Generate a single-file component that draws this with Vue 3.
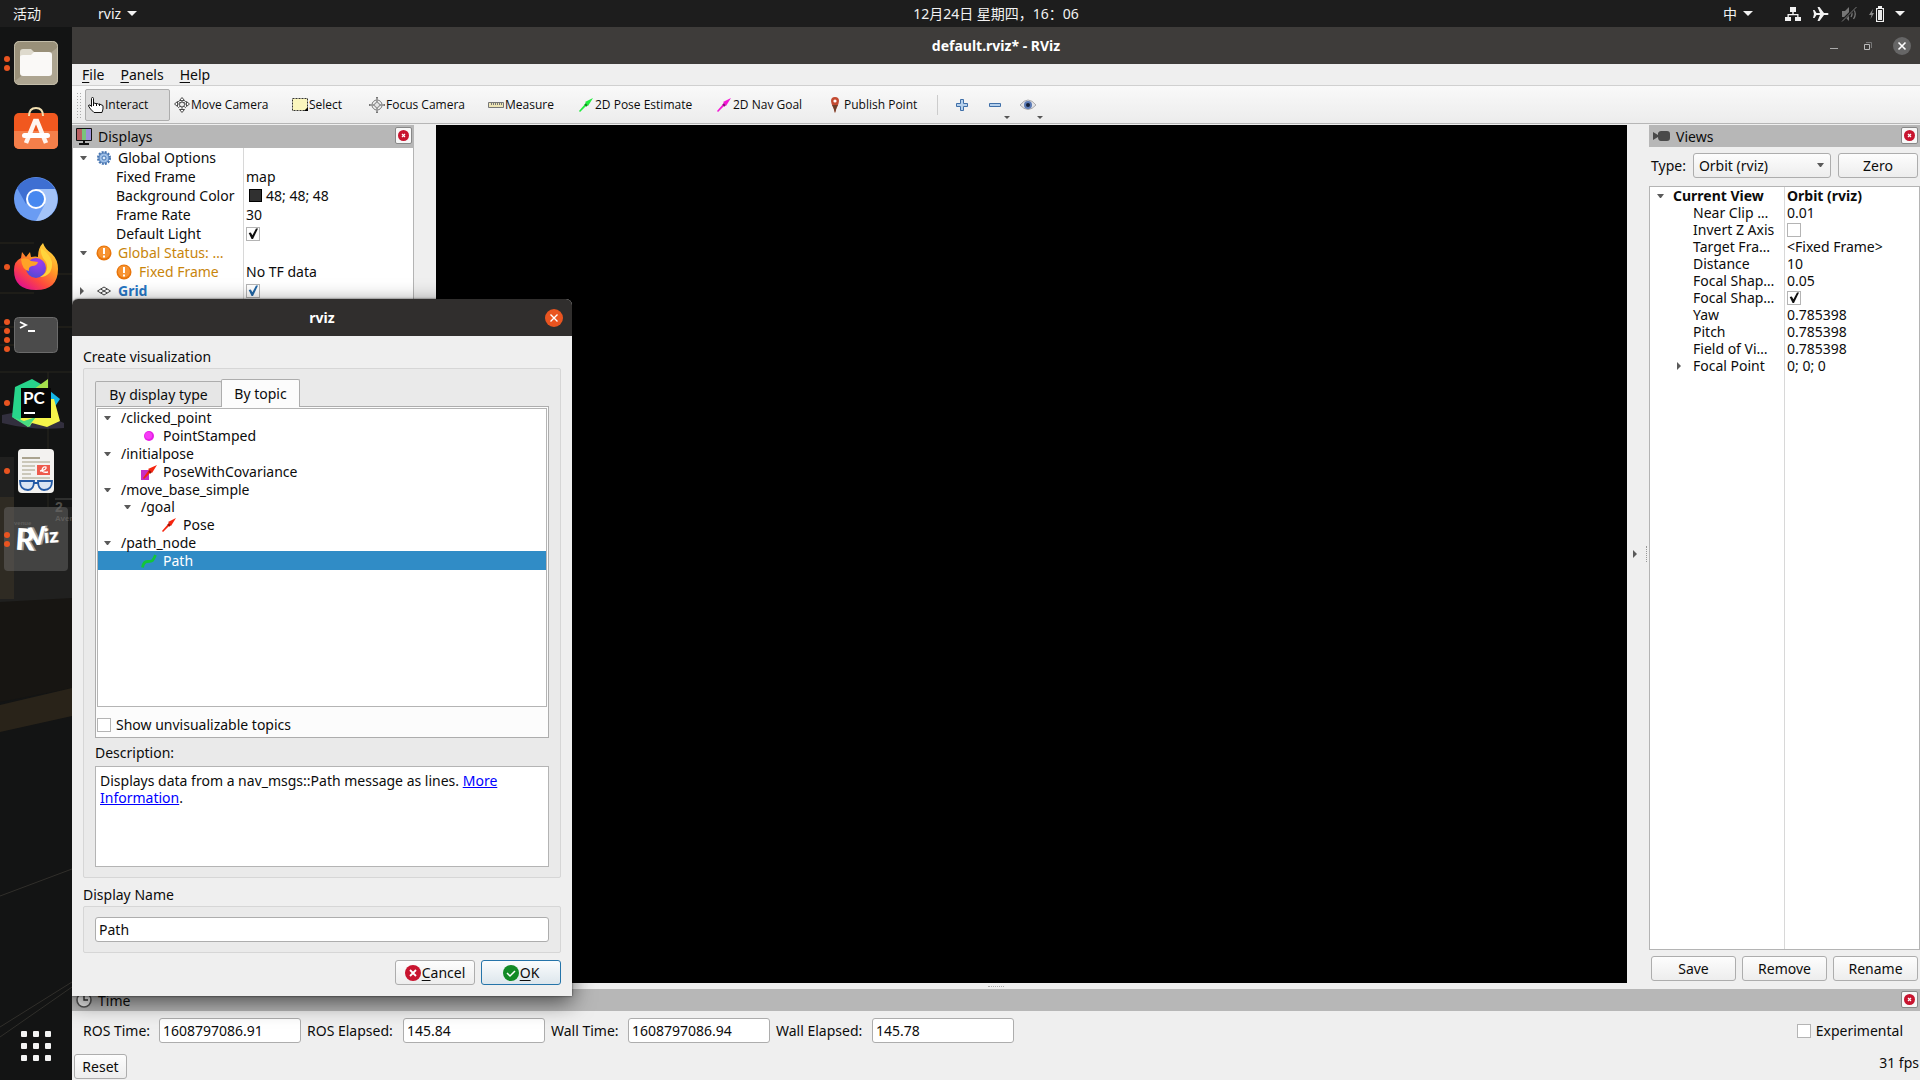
<template>
  <div class="desktop">
    <header class="topbar">
      <button class="top-btn activities">活动</button>
      <button class="top-btn app-menu">rviz <i class="caret"></i></button>
      <button class="top-btn clock">12月24日 星期四，16：06</button>
      <div class="tray">
        <button class="top-btn lang">中 <i class="caret"></i></button>
        <svg width="16" height="16" viewBox="0 0 16 16" fill="#f2f2f2">
          <path d="M5 1h6v5H8.700v2H13.500v3H16v4h-6v-4h2.200V9.300H3.800V11H6v4H0v-4h2.500V8h4.800V6H5z" />
        </svg>
        <svg width="16" height="16" viewBox="0 0 16 16" fill="#f2f2f2">
          <path d="M0 4h1.500L3.500 7H7L4.500 1H6.500L11 7h3.500a1 1 0 0 1 0 2H11l-4.500 6H4.500L7 9H3.500l-2 3H0l1-4z" />
        </svg>
        <svg width="16" height="16" viewBox="0 0 16 16" fill="#777">
          <path d="M1 5h3l4-4v14l-4-4H1z" />
          <path d="M10 5q2 3 0 6M12.500 3q3.500 5 0 10" fill="none" stroke="#777" stroke-width="1.300" />
          <path d="M1 15L15 1" stroke="#1d1d1d" stroke-width="2.500" />
          <path d="M1 15.500L15.500 1" stroke="#777" />
        </svg>
        <svg width="16" height="16" viewBox="0 0 16 16">
          <path d="M4 3L0 9h2.500L1.500 13 5 7H3z" fill="#8b8b8b" />
          <path d="M9 0h4v2h2v14H7V2h2z" fill="#f2f2f2" />
          <path d="M8.500 3.500h5v11h-5z" fill="#e8e8e8" stroke="#1d1d1d" />
        </svg>
        <i class="caret"></i>
      </div>
    </header>

    <div class="workspace">
      <nav class="dock">
        <svg class="wallpaper" viewBox="0 0 72 1053" preserveAspectRatio="none">
          <path d="M0 216h34M0 266h34M30 247h42M0 300h72M0 318h30" stroke="#3b3524" opacity=".6" />
          <path d="M0 345h72M48 345v190" stroke="#332e25" opacity=".7" />
          <path d="M2 388q30-8 62 8v5q-30 3-62-5z" fill="#4d4560" opacity=".55" />
          <path d="M0 430h14v50h58v110H0z" fill="#20201f" />
          <path d="M0 470h14v102H0z" fill="#3a3426" opacity=".6" />
          <path d="M55 472h17" stroke="#4a4a48" />
          <text x="55" y="485" class="sign" font-size="14">2</text>
          <text x="55" y="494" class="sign" font-size="8">Aven</text>
          <text x="14" y="498" class="sign" font-size="6">venue</text>
          <path d="M0 575l72-4v90L0 675z" fill="#171512" />
          <path d="M0 678l72-17v28L0 705z" fill="#292319" />
          <path d="M0 869l72-27M0 1000l72-45M0 1010l72-50" stroke="#302f2b" fill="none" />
        </svg>
        <button v-for="a in apps" :key="a.name" class="dock-item" :class="{ current: a.name === 'rviz' }" :aria-label="a.name">
          <span class="dots"><i v-for="n in a.windows" :key="n"></i></span>

          <svg v-if="a.name === 'files'" width="48" height="48" viewBox="0 0 48 48">
            <rect x="2" y="2" width="44" height="44" rx="5" fill="#999079" />
            <path d="M3 42L46 8v33a5 5 0 0 1-5 5H7z" fill="#ada591" />
            <rect x="2.500" y="2.500" width="43" height="43" rx="5" fill="none" stroke="#c3bda9" />
            <path d="M8 13q0-3 3-3h8l4 4h8v9H8z" fill="#dedacd" />
            <path d="M8 18q0-2 3-2h8l3-3h15q3 0 3 3v18q0 3-3 3H11q-3 0-3-3z" fill="#faf9f7" />
          </svg>
          <svg v-else-if="a.name === 'software'" width="48" height="48" viewBox="0 0 48 48">
            <rect x="2" y="6" width="44" height="36" rx="5" fill="#f1581f" />
            <path d="M2 24h44v13a5 5 0 0 1-5 5H7a5 5 0 0 1-5-5z" fill="#f47f4a" />
            <path d="M17 9q0-8 7-8t7 8" fill="none" stroke="#f2dfb0" stroke-width="2" />
            <path d="M14 36l9-22h2l9 22" fill="none" stroke="#fff5ef" stroke-width="4.500" />
            <rect x="10" y="26" width="28" height="5" rx="2.500" fill="#fff" />
          </svg>
          <svg v-else-if="a.name === 'chromium'" width="48" height="48" viewBox="0 0 48 48">
            <circle cx="24" cy="24" r="22" fill="#6a9cf3" />
            <path d="M5 13A22 22 0 0 1 43 14H24L14 29z" fill="#3e6fd2" />
            <path d="M43 14A22 22 0 0 1 24 46l9-17-9-15z" fill="#a3c3f8" />
            <circle cx="24" cy="24" r="10" fill="#fff" />
            <circle cx="24" cy="24" r="8" fill="#4788f0" />
          </svg>
          <svg v-else-if="a.name === 'firefox'" width="48" height="48" viewBox="0 0 48 48">
            <defs>
              <linearGradient id="fx" x1="1" y1="0" x2=".3" y2="1">
                <stop offset="0" stop-color="#fff04a" /><stop offset=".45" stop-color="#ff9a25" />
                <stop offset=".75" stop-color="#ff4a3d" /><stop offset="1" stop-color="#e31587" />
              </linearGradient>
              <radialGradient id="fxg" cx=".6" cy=".2" r=".9">
                <stop offset="0" stop-color="#a63bf0" /><stop offset="1" stop-color="#4a4bd0" />
              </radialGradient>
            </defs>
            <path d="M10 9l4 5 4-5 1 5q5-1 7 0 0-9 5-14 2 6 8 10 7 6 7 16 0 21-22 21T2 27q0-9 7-12z" fill="url(#fx)" />
            <circle cx="24" cy="25" r="10" fill="url(#fxg)" />
            <path d="M9 16q6-2 10 2l7 1q-1 4-6 4-4 1-3 5-7-1-8-12z" fill="#ffa327" />
            <path d="M29 5q-1 8 5 14 4 10-6 15 13-1 12-15-2-8-11-14z" fill="#ffd43c" />
          </svg>
          <svg v-else-if="a.name === 'terminal'" width="48" height="48" viewBox="0 0 48 48">
            <rect x="2.500" y="6.500" width="43" height="35" rx="4" fill="#4b4b4b" stroke="#6b6b6b" />
            <path d="M8 11l6 3-6 3M16 20h7" fill="none" stroke="#fff" stroke-width="1.800" />
          </svg>
          <svg v-else-if="a.name === 'pycharm'" width="48" height="48" viewBox="0 0 48 48">
            <path d="M3 8L20 0l14 8-16 40L0 38z" fill="#27d58b" />
            <path d="M36 0v14L22 10z" fill="#a5e04c" />
            <path d="M38 12l10 8-8 12z" fill="#14b7e8" />
            <path d="M42 20l6 22-13 6-15-4-4 4-8-8 30-20z" fill="#f6f44a" />
            <path d="M0 38l12 4 12-4-8 10z" fill="#48dc80" />
            <rect x="9" y="9" width="30" height="30" fill="#060606" />
            <rect x="12" y="33" width="11" height="2" fill="#fff" />
            <text x="11" y="25" class="pc-text">PC</text>
          </svg>
          <svg v-else-if="a.name === 'reader'" width="48" height="48" viewBox="0 0 48 48">
            <rect x="6" y="2" width="36" height="44" rx="4" fill="#f3f2f0" />
            <path d="M10 11h18" stroke="#aaa38f" stroke-width="2" />
            <path d="M10 15h28M10 19h13M10 23h13M10 27h9M10 31h28" stroke="#cbc7b9" stroke-width="2" />
            <rect x="25" y="18" width="13" height="10" fill="#ee5a4c" />
            <path d="M28 24q7-1 6-4-3-1-4 3 0 3 6 2" fill="none" stroke="#fff" stroke-width="1.300" />
            <path d="M8 34h14q0 9-6 9-8 0-8-9zM26 34h14q0 9-8 9-6 0-6-9zM22 36h4" fill="#cfe0f4" fill-opacity=".7" stroke="#245aa5" stroke-width="1.800" />
          </svg>
          <svg v-else width="48" height="48" viewBox="0 0 48 48" class="rviz-logo">
            <g fill="#9a9a9a">
              <text x="5" y="35" font-size="30" transform="rotate(4 10 30)">R</text>
              <text x="19" y="30" font-size="25" transform="rotate(-6 24 24)">V</text>
              <text x="33" y="28" font-size="20" transform="rotate(-4 34 24)">iz</text>
            </g>
            <g fill="#fff">
              <text x="3" y="35" font-size="30" transform="rotate(4 10 30)">R</text>
              <text x="17" y="30" font-size="25" transform="rotate(-6 24 24)">V</text>
              <text x="32" y="28" font-size="20" transform="rotate(-4 34 24)">iz</text>
            </g>
          </svg>
        </button>
        <button class="show-apps" aria-label="show applications"><i v-for="n in 9" :key="n"></i></button>
      </nav>

      <main class="window">
        <div class="titlebar">
          <span class="title">default.rviz* - RViz</span>
          <div class="win-controls">
            <button aria-label="minimize"><svg width="10" height="10"><path d="M1 7.500h8" stroke="#aaa" /></svg></button>
            <button aria-label="restore">
              <svg width="10" height="10" fill="none"><path d="M1.500 3.500h5v5h-5z" stroke="#bbb" /><path d="M3 1.500h5.500V7" stroke="#777" /></svg>
            </button>
            <button class="round" aria-label="close"><svg width="10" height="10"><path d="M1.500 1.500l7 7M8.500 1.500l-7 7" stroke="#fff" stroke-width="1.600" /></svg></button>
          </div>
        </div>

        <nav class="menubar">
          <button v-for="m in menus" :key="m"><u>{{ m[0] }}</u>{{ m.slice(1) }}</button>
        </nav>

        <div class="toolbar">
          <i class="grip"></i>
          <button v-for="t in tools" :key="t.label" class="tool" :class="{ active: t.label === 'Interact' }" :style="{ width: t.width + 'px' }">
            <svg width="16" height="16" viewBox="0 0 16 16" fill="none" v-html="icons[t.icon]"></svg>
            <span>{{ t.label }}</span>
          </button>
          <i class="tool-sep"></i>
          <button class="mini" aria-label="add tool">
            <svg width="14" height="14" viewBox="0 0 14 14"><path d="M5.500 1.500h3v4h4v3h-4v4h-3v-4h-4v-3h4z" fill="#b5d0ec" stroke="#3f6fa8" /></svg>
          </button>
          <button class="mini" aria-label="remove tool">
            <svg width="14" height="14" viewBox="0 0 14 14"><path d="M1.500 5.500h11v3h-11z" fill="#b5d0ec" stroke="#3f6fa8" /></svg>
            <i class="drop"></i>
          </button>
          <button class="mini" aria-label="view tools">
            <svg width="16" height="14" viewBox="0 0 16 14">
              <path d="M0 7q8-10 16 0-8 9-16 0z" fill="#e4e4e6" stroke="#a9a9ad" />
              <circle cx="8" cy="7" r="4" fill="#5c7bb5" /><circle cx="8" cy="7" r="2" fill="#152038" />
            </svg>
            <i class="drop"></i>
          </button>
        </div>

        <div class="panes">
          <section class="displays">
            <div class="dock-title">
              <svg width="16" height="17" viewBox="0 0 16 17">
                <path d="M1 1h5v11H1z" fill="#b95f62" /><path d="M6 1h4v11H6z" fill="#7ac37c" /><path d="M10 1h5v11h-5z" fill="#9c90d8" />
                <path d="M.5.500h15v12H.5z" fill="none" stroke="#111" /><path d="M3 16h10M8 13v3" stroke="#111" stroke-width="2" />
              </svg>
              <span>Displays</span>
              <button class="dock-close" aria-label="close Displays"><svg width="11" height="11" viewBox="0 0 11 11" v-html="icons.close"></svg></button>
            </div>
            <div class="tree display-tree">
              <table>
                <tbody>
                  <tr v-for="r in displayRows" :key="r.key">
                    <th scope="row" :class="[r.tone, 'level-' + r.level]">
                      <div class="cell">
                        <i class="arrow" :class="r.arrow"></i>
                        <svg v-if="r.icon" width="16" height="16" viewBox="0 0 16 16" fill="none" v-html="icons[r.icon]"></svg>
                        <span>{{ r.name }}</span>
                      </div>
                    </th>
                    <td>
                      <input v-if="r.checkable" type="checkbox" checked :class="r.tone" :aria-label="r.name" />
                      <div v-else class="cell"><i v-if="r.swatch" class="swatch"></i>{{ r.value }}</div>
                    </td>
                  </tr>
                </tbody>
              </table>
            </div>
          </section>

          <div class="viewport"></div>

          <button class="fold" aria-label="collapse"><i class="arrow closed"></i><i class="fold-grip"></i></button>

          <section class="views">
            <div class="dock-title">
              <svg width="17" height="12" viewBox="0 0 17 12"><path d="M0 2l5 3V3q1-2 3-2h6q3 0 3 3v4q0 3-3 3H8Q5 11 5 7l-5 3z" fill="#4a4a4a" /></svg>
              <span>Views</span>
              <button class="dock-close" aria-label="close Views"><svg width="11" height="11" viewBox="0 0 11 11" v-html="icons.close"></svg></button>
            </div>
            <div class="type-row">
              <label for="view-type">Type:</label>
              <div class="select-wrap">
                <select id="view-type"><option>Orbit (rviz)</option></select>
                <i class="arrow open"></i>
              </div>
              <button class="btn">Zero</button>
            </div>
            <div class="tree view-tree">
              <table>
                <tbody>
                  <tr v-for="r in viewRows" :key="r.key">
                    <th scope="row" :class="[r.tone, 'level-' + r.level]">
                      <div class="cell"><i class="arrow" :class="r.arrow"></i><span>{{ r.name }}</span></div>
                    </th>
                    <td :class="r.tone">
                      <input v-if="r.checkable" type="checkbox" :checked="r.checked" :aria-label="r.name" />
                      <div v-else class="cell">{{ r.value }}</div>
                    </td>
                  </tr>
                </tbody>
              </table>
            </div>
            <div class="view-actions">
              <button class="btn">Save</button>
              <button class="btn">Remove</button>
              <button class="btn">Rename</button>
            </div>
          </section>
        </div>

        <div class="splitter"><i></i></div>

        <section class="time">
          <div class="dock-title">
            <svg width="16" height="16" viewBox="0 0 16 16"><circle cx="8" cy="8" r="7" fill="#eee" stroke="#555" stroke-width="1.600" /><path d="M8 4v4h4" fill="none" stroke="#333" stroke-width="1.400" /></svg>
            <span>Time</span>
            <button class="dock-close" aria-label="close Time"><svg width="11" height="11" viewBox="0 0 11 11" v-html="icons.close"></svg></button>
          </div>
          <div class="time-row">
            <template v-for="c in clocks" :key="c.id">
              <label :for="c.id">{{ c.label }}</label>
              <input :id="c.id" class="field" type="text" :value="c.value" />
            </template>
            <label class="check experimental"><input type="checkbox" />Experimental</label>
          </div>
          <div class="status-row">
            <button class="btn reset">Reset</button>
            <span>31 fps</span>
          </div>
        </section>

        <section class="dialog" role="dialog" aria-label="rviz">
          <div class="dialog-title">
            <span>rviz</span>
            <button class="dialog-close" aria-label="close dialog"><svg width="10" height="10"><path d="M1.500 1.500l7 7M8.500 1.500l-7 7" stroke="#fff" stroke-width="1.400" /></svg></button>
          </div>
          <div class="dialog-body">
            <h2>Create visualization</h2>
            <div class="group">
              <div class="tabs" role="tablist">
                <button role="tab" aria-selected="false">By display type</button>
                <button role="tab" aria-selected="true" class="selected">By topic</button>
              </div>
              <div class="tab-page">
                <ul class="topics">
                  <li v-for="t in topics" :key="t.name" :class="['depth-' + t.depth, { leaf: t.icon, picked: t.name === 'Path' }]">
                    <svg v-if="t.icon" width="16" height="16" viewBox="0 0 16 16" fill="none" v-html="icons[t.icon]"></svg>
                    <i v-else class="arrow open"></i>
                    <span>{{ t.name }}</span>
                  </li>
                </ul>
                <label class="check"><input type="checkbox" />Show unvisualizable topics</label>
              </div>
              <h3>Description:</h3>
              <div class="description">Displays data from a nav_msgs::Path message as lines. <a href="#">More Information</a>.</div>
            </div>
            <label class="name-label" for="display-name">Display Name</label>
            <div class="group name-group"><input id="display-name" class="field" type="text" value="Path" /></div>
            <div class="dialog-actions">
              <button class="btn">
                <svg width="16" height="16"><circle cx="8" cy="8" r="8" fill="#c8142f" /><path d="M5 5l6 6M11 5l-6 6" stroke="#fff" stroke-width="1.800" /></svg>
                <span><u>C</u>ancel</span>
              </button>
              <button class="btn default">
                <svg width="16" height="16"><circle cx="8" cy="8" r="8" fill="#128a26" /><path d="M4 8l3 3 5-5" fill="none" stroke="#fff" stroke-width="1.500" /></svg>
                <span><u>O</u>K</span>
              </button>
            </div>
          </div>
        </section>
      </main>
    </div>
  </div>
</template>

<script setup>
const menus = ['File', 'Panels', 'Help']

const apps = [
  { name: 'files', windows: 2 },
  { name: 'software', windows: 0 },
  { name: 'chromium', windows: 0 },
  { name: 'firefox', windows: 1 },
  { name: 'terminal', windows: 4 },
  { name: 'pycharm', windows: 1 },
  { name: 'reader', windows: 1 },
  { name: 'rviz', windows: 2 }
]

const tools = [
  { label: 'Interact', icon: 'hand', width: 85 },
  { label: 'Move Camera', icon: 'move', width: 117 },
  { label: 'Select', icon: 'select', width: 76 },
  { label: 'Focus Camera', icon: 'focus', width: 118 },
  { label: 'Measure', icon: 'ruler', width: 89 },
  { label: '2D Pose Estimate', icon: 'greenArrow', width: 137 },
  { label: '2D Nav Goal', icon: 'pinkArrow', width: 110 },
  { label: 'Publish Point', icon: 'pin', width: 110 }
]

const arrow = (color, dark) =>
  `<path d="M1 14L8 6 7 5l8-4-5 8-1-1-7 7z" fill="${color}"/><path d="M7 7l2 2" stroke="${dark}" stroke-width="2"/>`

const icons = {
  close: '<circle cx="5.500" cy="5.500" r="5.500" fill="#c8142f"/><path d="M4 4l3 3M7 4L4 7" stroke="#fff" stroke-width="1.200"/>',
  hand: '<path d="M3.500 9.500V1.500q0-1 1-1t1 1v5q1.500-1 2.500.3 1.500-.8 2.500.4 1.500-.7 2.500.6 1.800 0 2 1.200v3L14 15.500H6L2.500 12 .5 9q0-1.500 1.500-1z" fill="#fff" stroke="#111"/><path d="M5.500 6v3M8.500 6.500V9M11.500 7v2" stroke="#111"/>',
  move: '<path d="M8 .5l2.500 3h-5zM8 15.500l2.500-3h-5zM.5 7l3-2.500v5zM15.500 7l-3-2.500v5z" fill="#fff" stroke="#444"/><path d="M8 3v9M3 7h10M4 4l8 7M12 4l-8 7" stroke="#666"/><circle cx="8" cy="7.500" r="2.500" fill="#eee" stroke="#444"/>',
  select: '<path d="M.5 1.500h15v12H.5z" fill="#fbf6bd" stroke="#333" stroke-dasharray="2 1"/><path d="M16 10v4h-4z" fill="#000"/>',
  focus: '<circle cx="8" cy="8" r="5" stroke="#777"/><circle cx="8" cy="8" r="2.500" stroke="#777"/><path d="M8 0v6M8 10v6M0 8h6M10 8h6" stroke="#777" stroke-width="2"/><path d="M8 1v14M1 8h14" stroke="#ddd" stroke-width=".7"/>',
  ruler: '<path d="M.5 5.500h15v5H.5z" fill="#eee5b5" stroke="#777"/><path d="M3.500 6v2M5.500 6v2M7.500 6v2M9.500 6v2M11.500 6v2M13.500 6v2" stroke="#777"/>',
  greenArrow: arrow('#1fec3c', '#0b8c1d'),
  pinkArrow: arrow('#f316d5', '#8e0a7c'),
  redArrow: arrow('#f6240e', '#951006'),
  pin: '<path d="M8 0Q4 0 4 4q0 3 2.500 7L8 16l1.500-5Q12 7 12 4q0-4-4-4z" fill="#c34a31"/><path d="M5 8h6l-1.500 3L8 16l-1.500-5z" fill="#6d402c"/><circle cx="8" cy="4" r="1.600" fill="#fff"/>',
  gear: '<circle cx="8" cy="8" r="6" stroke="#4675b2" stroke-width="2" stroke-dasharray="2 1.140"/><circle cx="8" cy="8" r="5" fill="#9fc0e8" stroke="#4675b2"/><circle cx="8" cy="8" r="2" fill="#dcebfb" stroke="#4675b2"/>',
  warn: '<circle cx="8" cy="8" r="7.500" fill="#e8750a"/><circle cx="8" cy="7.500" r="6" fill="#f79331"/><path d="M8 3v6M8 10.500v2" stroke="#fff" stroke-width="2"/>',
  grid: '<path d="M1.500 8L8 4l6.500 4L8 12zM4.700 6l6.500 4M11.200 6l-6.500 4" stroke="#444"/>',
  sphere: '<circle cx="8" cy="8" r="5" fill="#e51fe5"/><circle cx="7.500" cy="7.500" r="3.500" fill="#f73cf7"/>',
  covariance: '<path d="M0 6h8v10H0z" fill="#c72dc5"/><path d="M2 14l6-8-1-1 9-4-5 8-1-1-7 7z" fill="#f6240e"/><path d="M8 7l2 2" stroke="#951006" stroke-width="2"/>',
  path: '<path d="M1.500 14.500q1-6 5-6t5-1 3-5.500" stroke="#13c53a" stroke-width="2.800"/>'
}

const displayRows = [
  { key: 1, level: 0, arrow: 'open', icon: 'gear', name: 'Global Options' },
  { key: 2, level: 1, name: 'Fixed Frame', value: 'map' },
  { key: 3, level: 1, name: 'Background Color', value: '48; 48; 48', swatch: true },
  { key: 4, level: 1, name: 'Frame Rate', value: '30' },
  { key: 5, level: 1, name: 'Default Light', checkable: true },
  { key: 6, level: 0, arrow: 'open', icon: 'warn', name: 'Global Status: …', tone: 'warning' },
  { key: 7, level: 1, icon: 'warn', name: 'Fixed Frame', value: 'No TF data', tone: 'warning' },
  { key: 8, level: 0, arrow: 'closed', icon: 'grid', name: 'Grid', checkable: true, tone: 'enabled' }
]

const viewRows = [
  { key: 1, level: 0, arrow: 'open', name: 'Current View', value: 'Orbit (rviz)', tone: 'bold' },
  { key: 2, level: 1, name: 'Near Clip …', value: '0.01' },
  { key: 3, level: 1, name: 'Invert Z Axis', checkable: true },
  { key: 4, level: 1, name: 'Target Fra…', value: '<Fixed Frame>' },
  { key: 5, level: 1, name: 'Distance', value: '10' },
  { key: 6, level: 1, name: 'Focal Shap…', value: '0.05' },
  { key: 7, level: 1, name: 'Focal Shap…', checkable: true, checked: true },
  { key: 8, level: 1, name: 'Yaw', value: '0.785398' },
  { key: 9, level: 1, name: 'Pitch', value: '0.785398' },
  { key: 10, level: 1, name: 'Field of Vi…', value: '0.785398' },
  { key: 11, level: 1, arrow: 'closed', name: 'Focal Point', value: '0; 0; 0' }
]

const topics = [
  { name: '/clicked_point', depth: 0 },
  { name: 'PointStamped', depth: 1, icon: 'sphere' },
  { name: '/initialpose', depth: 0 },
  { name: 'PoseWithCovariance', depth: 1, icon: 'covariance' },
  { name: '/move_base_simple', depth: 0 },
  { name: '/goal', depth: 1 },
  { name: 'Pose', depth: 2, icon: 'redArrow' },
  { name: '/path_node', depth: 0 },
  { name: 'Path', depth: 1, icon: 'path' }
]

const clocks = [
  { id: 'ros-time', label: 'ROS Time:', value: '1608797086.91' },
  { id: 'ros-elapsed', label: 'ROS Elapsed:', value: '145.84' },
  { id: 'wall-time', label: 'Wall Time:', value: '1608797086.94' },
  { id: 'wall-elapsed', label: 'Wall Elapsed:', value: '145.78' }
]
</script>

<style>
body { margin: 0; overflow: hidden; }
</style>

<style scoped>
.desktop {
  height: 100vh;
  display: flex;
  flex-direction: column;
  font-family: "Noto Sans", "Noto Sans CJK SC", sans-serif;
  font-size: 14px;
  line-height: 17px;
  color: #0c0c0c;
  background: #151515;
}
.desktop *, .desktop *::before { box-sizing: border-box; }
button, input, select { font: inherit; color: inherit; }
button { padding: 0; border: 0; background: none; white-space: nowrap; }
label, span { white-space: nowrap; }
svg { flex: none; display: block; }
u { text-underline-offset: 2px; }

/* top bar */
.topbar {
  height: 27px;
  flex: none;
  display: grid;
  grid-template-columns: 72px 1fr auto 1fr;
  align-items: center;
  background: #1d1d1d;
  color: #f2f2f2;
}
.top-btn { display: flex; align-items: center; gap: 6px; }
.activities { padding-left: 13px; }
.app-menu { padding-left: 26px; }
.caret { border: 5px solid transparent; border-top-color: #f2f2f2; border-bottom: 0; }
.tray { display: flex; align-items: center; justify-content: flex-end; gap: 12px; padding-right: 15px; }
.tray > .caret { margin-left: -2px; }
.lang { margin-right: 20px; }

.workspace { flex: 1; display: flex; min-height: 0; }

/* launcher */
.dock {
  width: 72px;
  flex: none;
  position: relative;
  display: flex;
  flex-direction: column;
  align-items: center;
  gap: 4px;
  padding: 4px 0 19px;
  background: #131414;
}
.wallpaper { position: absolute; inset: 0; width: 100%; height: 100%; }
.sign { font-family: "Liberation Sans", sans-serif; font-weight: 700; fill: #4e4c48; }
.dock-item {
  position: relative;
  width: 64px;
  height: 64px;
  display: flex;
  align-items: center;
  justify-content: center;
  border-radius: 4px;
}
.dock-item.current { background: rgba(120, 120, 120, .4); }
.dots { position: absolute; left: 0; top: 0; height: 100%; display: flex; flex-direction: column; justify-content: center; gap: 3px; }
.dots i { width: 6px; height: 6px; border-radius: 50%; background: #e95420; }
.pc-text { font: 700 17px Lato, sans-serif; fill: #fff; }
.rviz-logo { overflow: visible; }
.rviz-logo text { font-family: Lato, sans-serif; font-weight: 900; }
.show-apps { position: relative; margin-top: auto; display: grid; grid-template-columns: repeat(3, 6px); gap: 6px; }
.show-apps i { height: 6px; border-radius: 1px; background: #f4f4f4; }

/* main window */
.window {
  flex: 1;
  min-width: 0;
  position: relative;
  overflow: hidden;
  display: flex;
  flex-direction: column;
  background: #efefef;
}
.titlebar { height: 37px; flex: none; display: grid; grid-template-columns: 1fr auto 1fr; align-items: center; background: #3e3c3a; color: #fff; }
.title { grid-column: 2; font-weight: 700; }
.win-controls { display: flex; justify-content: flex-end; align-items: center; gap: 16px; padding-right: 9px; }
.win-controls button, .dialog-close { width: 18px; height: 18px; border-radius: 50%; display: grid; place-items: center; }
.win-controls .round { background: #666; }
.menubar { height: 22px; flex: none; display: flex; align-items: center; gap: 16px; padding-left: 10px; border-bottom: 1px solid #d0d0d0; }

.toolbar {
  height: 38px;
  flex: none;
  display: flex;
  align-items: center;
  gap: 1px;
  padding: 0 4px;
  border-bottom: 1px solid #b6b6b6;
  background: linear-gradient(#f9f9f9, #ececec);
  font-family: "Open Sans", sans-serif;
  font-size: 12px;
}
.grip { width: 5px; height: 26px; margin-right: 3px; background: radial-gradient(#aaa 20%, transparent 40%) 0 0 / 3px 3px; }
.tool { height: 32px; display: flex; align-items: center; gap: 1px; padding: 0 2px; border: 1px solid transparent; border-radius: 2px; }
.tool.active { border-color: #adadad; background: #dcdcdc; }
.tool-sep { width: 1px; height: 20px; margin: 0 7px 0 2px; background: #ccc; }
.mini { position: relative; width: 32px; height: 32px; display: grid; place-items: center; }
.drop { position: absolute; right: 1px; bottom: 2px; border: 3px solid transparent; border-top-color: #555; border-bottom: 0; }

/* panes */
.panes { flex: 1; min-height: 0; display: flex; padding-top: 1px; }
.displays { width: 342px; display: flex; flex-direction: column; flex: none; margin-right: 22px; }
.viewport { flex: 1; background: #000; }
.fold { width: 22px; display: flex; align-items: center; justify-content: space-between; padding: 0 2px 0 6px; }
.fold-grip { height: 16px; border-left: 1px dotted #999; }
.views { width: 271px; flex: none; display: flex; flex-direction: column; }
.dock-title { height: 22px; flex: none; display: flex; align-items: center; gap: 6px; padding: 0 2px 0 4px; background: #b7b7b7; }
.displays .dock-title { height: 23px; }
.dock-close {
  width: 17px;
  height: 17px;
  margin: 0 0 2px auto;
  display: grid;
  place-items: center;
  border: 1px solid #888;
  border-radius: 2px;
  background: #f8f8f8;
}

.arrow { width: 7px; flex: none; }
.arrow.open { border: 3px solid transparent; border-top: 4px solid #5a5a5a; border-bottom: 0; }
.arrow.closed { width: 4px; margin-right: 3px; border: 4px solid transparent; border-left: 4px solid #5a5a5a; border-right: 0; }

.tree { flex: 1; background: #fff; position: relative; border: 1px solid #b4b4b4; }
.tree::before { content: ""; position: absolute; top: 0; bottom: 0; width: 1px; background: #d8d8d8; }
.display-tree { border-width: 0 1px; line-height: 19px; }
.display-tree::before { left: 170px; }
.view-tree::before { left: 134px; }
.tree table { width: 100%; table-layout: fixed; border-collapse: collapse; }
.tree th, .tree td { padding: 0; font-weight: 400; text-align: left; }
.display-tree tr { height: 19px; }
.view-tree tr { height: 17px; }
.display-tree th { width: 170px; }
.view-tree th { width: 134px; }
.tree td { padding-left: 3px; }
.cell { display: flex; align-items: center; height: 17px; white-space: nowrap; }
.display-tree .cell { height: 19px; }
.display-tree th .cell { gap: 6px; padding-left: 7px; }
.display-tree .level-0 svg { margin-left: 3px; }
.display-tree .level-1 .cell { padding-left: 29px; gap: 7px; }
.view-tree th .cell { padding-left: 7px; gap: 9px; }
.view-tree .level-1 .cell { padding-left: 27px; }
.tree .bold { font-weight: 700; }
.tree .warning { color: #c8850c; }
.tree th.enabled { color: #2676c4; font-weight: 700; }
.swatch { width: 13px; height: 13px; margin: 0 4px 0 3px; border: 1px solid #000; background: #303030; }

input[type="checkbox"] {
  appearance: none;
  width: 14px;
  height: 14px;
  margin: 0;
  display: block;
  flex: none;
  border: 1px solid #b4b4b4;
  background: #fff;
}
input[type="checkbox"]:checked::before {
  content: "";
  display: block;
  height: 12px;
  background: #111;
  clip-path: polygon(14% 45%, 32% 42%, 45% 65%, 75% 8%, 92% 8%, 50% 96%, 38% 96%);
}
input.enabled:checked::before { background: #2367a5; }

.btn {
  height: 25px;
  display: flex;
  align-items: center;
  justify-content: center;
  gap: 1px;
  border: 1px solid #adadad;
  border-radius: 3px;
  background: linear-gradient(#fdfdfd, #ededed);
}
.type-row { display: flex; align-items: center; gap: 7px; padding: 6px 2px 8px; }
.select-wrap { flex: 1; position: relative; }
.select-wrap select {
  width: 100%;
  height: 25px;
  display: block;
  appearance: none;
  padding: 0 5px;
  border: 1px solid #adadad;
  border-radius: 3px;
  background: linear-gradient(#fdfdfd, #ededed);
}
.select-wrap .arrow { position: absolute; right: 7px; top: 10px; }
.type-row .btn { width: 80px; }
.view-actions { display: flex; gap: 6px; padding: 6px 2px 2px; }
.view-actions .btn { flex: 1; }

.splitter { height: 6px; flex: none; display: flex; justify-content: center; align-items: center; }
.splitter i { width: 16px; border-top: 1px dotted #aaa; }

/* time panel */
.time { flex: none; }
.time-row { display: flex; align-items: center; gap: 6px; padding: 7px 17px 11px 11px; }
.field { height: 25px; padding: 0 3px; border: 1px solid #adadad; border-radius: 3px; background: #fff; }
.time-row .field { width: 142px; }
.time-row label:nth-of-type(1) { width: 70px; }
.time-row label:nth-of-type(2) { width: 90px; }
.time-row label:nth-of-type(3) { width: 71px; }
.time-row label:nth-of-type(4) { width: 90px; }
.check { display: flex; align-items: center; gap: 5px; }
.experimental { margin-left: auto; }
.status-row { display: flex; justify-content: space-between; align-items: flex-start; padding: 0 1px 1px 2px; }
.reset { width: 53px; }

/* create display dialog */
.dialog {
  position: absolute;
  left: 0;
  top: 272px;
  width: 500px;
  border-radius: 6px 6px 0 0;
  background: #efefef;
  box-shadow: 0 0 2px rgba(0, 0, 0, .8), 0 6px 22px rgba(0, 0, 0, .6);
}
.dialog-title {
  height: 37px;
  display: grid;
  grid-template-columns: 1fr auto 1fr;
  align-items: center;
  padding: 0 9px;
  border-radius: 6px 6px 0 0;
  background: #302e2d;
  color: #fff;
  font-weight: 700;
}
.dialog-title span { grid-column: 2; }
.dialog-close { justify-self: end; background: #e95420; }
.dialog-body { padding: 12px 11px 11px; }
h2, h3 { margin: 0; font-size: 14px; font-weight: 400; }
h2 { margin-bottom: 3px; }
h3 { margin: 6px 0 5px; }
.group { padding: 10px 11px; border: 1px solid #d6d6d6; border-radius: 2px; background: #eaeaea; }
.tabs { display: flex; align-items: flex-end; }
.tabs button { min-width: 127px; height: 25px; padding: 0 11px; border: 1px solid #adadad; border-bottom: 0; border-radius: 2px 2px 0 0; background: #e6e6e6; }
.tabs .selected { min-width: 79px; height: 28px; position: relative; margin: 0 0 -1px -1px; background: #fcfcfc; }
.tab-page { padding: 1px 1px 4px; border: 1px solid #adadad; background: #fcfcfc; }
.topics { height: 299px; margin: 0 0 9px; padding: 0; list-style: none; border: 1px solid #b4b4b4; background: #fff; }
.topics li { height: 17px; display: flex; align-items: center; gap: 10px; padding-left: 6px; }
.topics .leaf { height: 19px; gap: 6px; }
.topics .depth-1 { padding-left: 26px; }
.topics .leaf.depth-1 { padding-left: 43px; }
.topics .leaf.depth-2 { padding-left: 63px; }
.topics .picked { background: #308cc6; color: #fff; }
.description { height: 101px; padding: 5px 4px; border: 1px solid #b4b4b4; background: #fff; }
.description a { color: #00f; }
.name-label { display: block; margin: 8px 0 3px; }
.dialog-actions { display: flex; justify-content: flex-end; gap: 6px; padding-top: 7px; }
.dialog-actions .btn { width: 80px; }
.dialog-actions .default { border-color: #2574a9; background: linear-gradient(#fafcfd, #dde6ec); }
.name-group .field { width: 100%; display: block; }
</style>
